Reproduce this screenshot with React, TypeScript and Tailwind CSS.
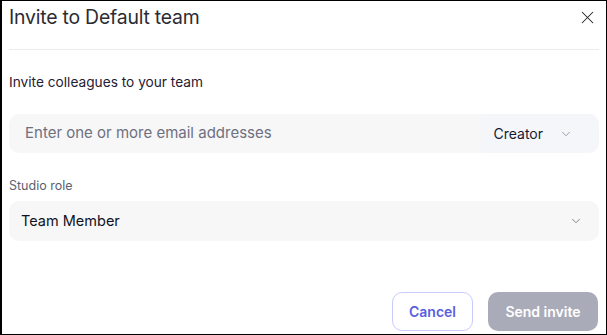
import { X, ChevronDown } from "lucide-react";

const FONT = { fontFamily: "Inter, 'Noto Sans', sans-serif" };

export default function App() {
  return (
    <div style={FONT} className="h-[335px] w-[607px] overflow-hidden bg-white">
      <div className="flex h-full flex-col border border-l-2 border-black">
        <header className="flex h-[48px] items-start justify-between pl-[7px] pr-[8px] pt-[4px]">
          <h2 className="text-[19.4px] leading-[24px] tracking-[-0.2px] text-[#2b2b33]">Invite to Default team</h2>
          <button type="button" className="mt-[2px] text-[#222]">
            <X className="h-[21px] w-[21px]" strokeWidth={1.2} />
          </button>
        </header>
        <div className="mx-[7px] mr-[7px] h-px bg-[#ececef]" />

        <div className="flex flex-1 flex-col px-[7px]">
          <p className="mt-[23px] text-[13.7px] leading-[18px] text-[#1f2033]">Invite colleagues to your team</p>

          <div className="mt-[23px] flex h-[39px] items-center rounded-[10px] bg-[#f7f7f8]">
            <span className="flex-1 pl-[16px] text-[15px] text-[#6e7081]">Enter one or more email addresses</span>
            <div className="flex h-full items-center gap-[16px] rounded-r-[10px] bg-[#f5f6fa] pl-[12px] pr-[26px]">
              <span className="text-[14px] text-[#141a33]">Creator</span>
              <ChevronDown className="h-[14px] w-[14px] text-[#8c8fa3]" strokeWidth={1.5} />
            </div>
          </div>

          <label className="mt-[25px] text-[12.5px] leading-[16px] text-[#5d6070]">Studio role</label>
          <div className="mt-[7px] flex h-[40px] items-center justify-between rounded-[10px] bg-[#f7f7f8] pl-[12px] pr-[16px]">
            <span className="text-[14.5px] text-[#111322]">Team Member</span>
            <ChevronDown className="h-[14px] w-[14px] text-[#6e7081]" strokeWidth={1.5} />
          </div>

          <div className="mt-auto mb-[3px] flex justify-end gap-[15px] pr-[1px]">
            <button
              type="button"
              className="h-[39px] w-[81px] rounded-[10px] border border-[#c9cbfb] text-[14px] font-semibold text-[#5a5fe0]"
            >
              Cancel
            </button>
            <button
              type="button"
              className="h-[39px] w-[110px] rounded-[10px] bg-[#a9abb9] text-[14px] font-semibold text-white"
            >
              Send invite
            </button>
          </div>
        </div>
      </div>
    </div>
  );
}
